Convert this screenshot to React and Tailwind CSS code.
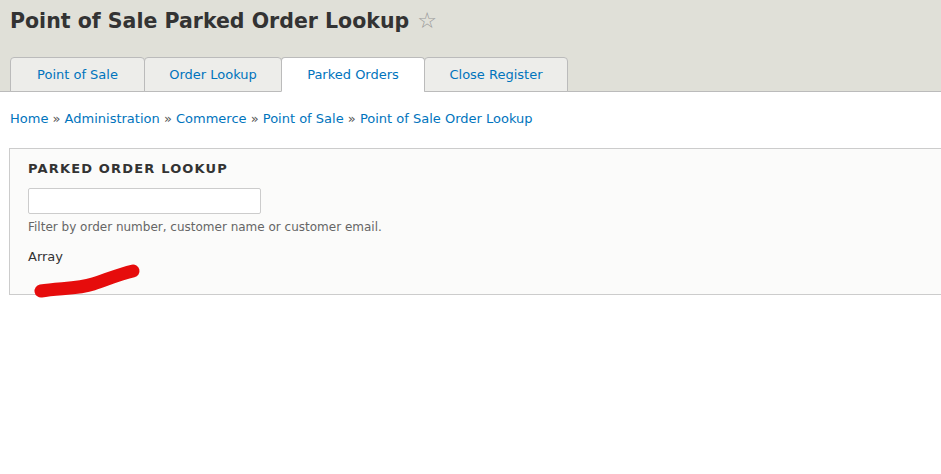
import { useState } from 'react'

const TABS = [
  { label: 'Point of Sale', w: 'w-[135px]' },
  { label: 'Order Lookup', w: 'w-[138px]' },
  { label: 'Parked Orders', w: 'w-[144px]', active: true },
  { label: 'Close Register', w: 'w-[144px]' },
]

const CRUMBS = ['Home', 'Administration', 'Commerce', 'Point of Sale', 'Point of Sale Order Lookup']

export default function App() {
  const [query, setQuery] = useState('')

  return (
    <div className="relative w-[941px] h-[474px] overflow-hidden bg-white text-[#333] font-['DejaVu_Sans',sans-serif]">
      {/* ── Header ─────────────────────────────────────────────── */}
      <div className="bg-[#e0e0d8] border-b border-[#bbb] px-[10px] pt-[6px]">
        <h1 className="flex items-center gap-[8px] text-[20.5px] leading-[30px] font-bold text-[#333]">
          Point of Sale Parked Order Lookup
          <span className="text-[22px] font-normal text-[#999]">☆</span>
        </h1>
        <ul className="flex mt-[21px] -mb-px">
          {TABS.map((t) => (
            <li
              key={t.label}
              className={`${t.w} h-[35px] flex items-center justify-center text-[13px] text-[#0074bd] border border-[#bbb] rounded-t-[4px] -ml-px first:ml-0 ${
                t.active ? 'bg-white border-b-white' : 'bg-[#ededea]'
              }`}
            >
              {t.label}
            </li>
          ))}
        </ul>
      </div>

      {/* ── Breadcrumb ─────────────────────────────────────────── */}
      <div className="px-[10px] pt-[18px] text-[13px] leading-[18px]">
        {CRUMBS.map((c, i) => (
          <span key={c}>
            {i > 0 && <span className="text-[#555]"> » </span>}
            <a className="text-[#0074bd]">{c}</a>
          </span>
        ))}
      </div>

      {/* ── Fieldset ───────────────────────────────────────────── */}
      <div className="ml-[9px] mr-[-20px] mt-[20px] h-[147px] border border-[#ccc] bg-[#fbfbfa] pl-[18px] pt-[12px]">
        <div className="text-[13px] leading-[16px] font-bold uppercase tracking-[0.09em] text-[#333]">
          Parked order lookup
        </div>
        <input
          value={query}
          onChange={(e) => setQuery(e.target.value)}
          className="block mt-[11px] w-[233px] h-[26px] border border-[#ccc] rounded-[2px] bg-white px-[4px] text-[13px] outline-none"
        />
        <div className="mt-[5px] text-[12px] leading-[16px] text-[#666]">
          Filter by order number, customer name or customer email.
        </div>
        <div className="mt-[14px] text-[13px] leading-[16px] text-[#333]">Array</div>
      </div>

      {/* red marker scribble over the page */}
      <svg className="absolute left-0 top-0 pointer-events-none" width="941" height="474">
        <path
          d="M41 291 C 58 288, 78 289, 93 284 S 120 274, 133 271"
          fill="none"
          stroke="#e60c0c"
          strokeWidth="13"
          strokeLinecap="round"
        />
      </svg>
    </div>
  )
}
